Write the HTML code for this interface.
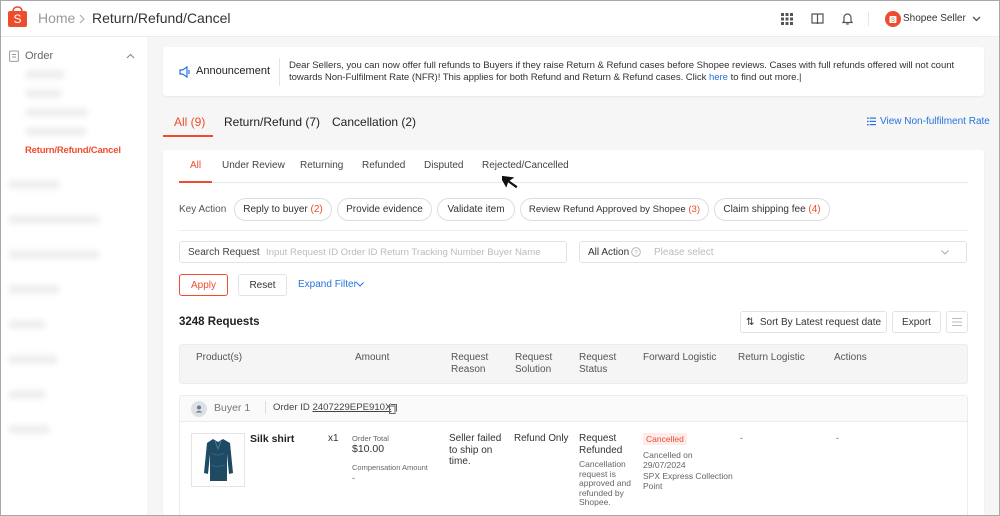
<!DOCTYPE html>
<html><head><meta charset="utf-8"><style>
*{box-sizing:border-box;margin:0;padding:0}
html,body{width:1000px;height:516px;overflow:hidden}
body{font-family:"Liberation Sans",Arial,sans-serif;color:#333;background:#f6f6f6;position:relative}
.frame{position:absolute;left:0;top:0;width:1000px;height:516px;border:1px solid #a8a8a8;pointer-events:none;z-index:10}
.a{position:absolute;white-space:nowrap}
.top{left:0;top:0;width:1000px;height:37px;background:#fff;border-bottom:1px solid #ececec}
.side{left:0;top:37px;width:147px;height:479px;background:#fff}
.blur{position:absolute;background:#eee;border-radius:8px;filter:blur(3px);height:9px}
.card{background:#fff;border-radius:3px;box-shadow:0 1px 2px rgba(0,0,0,.06)}
.chip{position:absolute;top:198px;height:23px;border:1px solid #ddd;border-radius:12px;font-size:10px;display:flex;align-items:center;justify-content:center;color:#333;white-space:nowrap}
.r{color:#ee4d2d}
.box{position:absolute;border:1px solid #e3e3e3;border-radius:3px;background:#fff}
.btn{display:flex;align-items:center;justify-content:center;font-size:10px}
.th{position:absolute;font-size:10px;color:#555;line-height:12px;top:352px}
.s{font-size:9px;color:#666;line-height:11px}
</style></head><body>
<div class="frame"></div>
<div class="a top"></div>
<svg class="a" style="left:8px;top:6px" width="19" height="21" viewBox="0 0 19 21"><path d="M5 6 Q5 1 9.5 1 Q14 1 14 6" fill="none" stroke="#ee4d2d" stroke-width="1.6"/><rect x="0" y="5" width="19" height="16" rx="2" fill="#ee4d2d"/><text x="9.5" y="17" font-size="12" fill="#fff" text-anchor="middle" font-family="Liberation Sans">S</text></svg>
<div class="a" style="left:38px;top:10px;font-size:14px;color:#999">Home</div>
<svg class="a" style="left:79px;top:14px" width="6" height="10"><path d="M1 1l4 4-4 4" fill="none" stroke="#aaa" stroke-width="1.1"/></svg>
<div class="a" style="left:92px;top:10px;font-size:14px;color:#333">Return/Refund/Cancel</div>
<svg class="a" style="left:781px;top:13px" width="12" height="12"><g fill="#555"><rect x="0" y="0" width="3" height="3"/><rect x="4.5" y="0" width="3" height="3"/><rect x="9" y="0" width="3" height="3"/><rect x="0" y="4.5" width="3" height="3"/><rect x="4.5" y="4.5" width="3" height="3"/><rect x="9" y="4.5" width="3" height="3"/><rect x="0" y="9" width="3" height="3"/><rect x="4.5" y="9" width="3" height="3"/><rect x="9" y="9" width="3" height="3"/></g></svg>
<svg class="a" style="left:811px;top:13px" width="13" height="12"><path d="M1 1h4.5q1 0 1 1v9q0-1-1-1H1zM12 1H7.5q-1 0-1 1v9q0-1 1-1H12z" fill="none" stroke="#555" stroke-width="1.2"/></svg>
<svg class="a" style="left:842px;top:12px" width="11" height="14"><path d="M2 9V5.5a3.5 3.5 0 0 1 7 0V9l1 1.5H1z M4.3 12h2.4" fill="none" stroke="#555" stroke-width="1.2"/></svg>
<div class="a" style="left:868px;top:12px;width:1px;height:14px;background:#e5e5e5"></div>
<svg class="a" style="left:885px;top:11px" width="16" height="16"><circle cx="8" cy="8" r="8" fill="#ee4d2d"/><rect x="4.5" y="5" width="7" height="7" rx="1" fill="#fff"/><text x="8" y="11" font-size="6" fill="#ee4d2d" text-anchor="middle">S</text></svg>
<div class="a" style="left:903px;top:13px;font-size:10px;color:#333">Shopee Seller</div>
<svg class="a" style="left:972px;top:16px" width="9" height="6"><path d="M1 1l3.5 3.5L8 1" fill="none" stroke="#555" stroke-width="1.3"/></svg>

<div class="a side"></div>
<svg class="a" style="left:9px;top:50px" width="10" height="12"><rect x="0.6" y="1" width="8.8" height="10.4" rx="1" fill="none" stroke="#999"/><path d="M3 4.5h4M3 7h4" stroke="#999"/></svg>
<div class="a" style="left:25px;top:50px;font-size:11px;color:#666">Order</div>
<svg class="a" style="left:126px;top:53px" width="9" height="6"><path d="M1 5l3.5-3.5L8 5" fill="none" stroke="#888" stroke-width="1.1"/></svg>
<div class="blur" style="left:25px;top:70px;width:40px"></div>
<div class="blur" style="left:25px;top:89px;width:37px"></div>
<div class="blur" style="left:25px;top:108px;width:63px"></div>
<div class="blur" style="left:25px;top:127px;width:62px"></div>
<div class="a" style="left:25px;top:145px;font-size:9.5px;color:#ee4d2d;font-weight:bold;letter-spacing:-.2px">Return/Refund/Cancel</div>
<div class="blur" style="left:8px;top:180px;width:52px"></div>
<div class="blur" style="left:8px;top:215px;width:92px"></div>
<div class="blur" style="left:8px;top:250px;width:92px"></div>
<div class="blur" style="left:8px;top:285px;width:52px"></div>
<div class="blur" style="left:8px;top:320px;width:38px"></div>
<div class="blur" style="left:8px;top:355px;width:50px"></div>
<div class="blur" style="left:8px;top:390px;width:38px"></div>
<div class="blur" style="left:8px;top:425px;width:42px"></div>

<div class="a card" style="left:163px;top:47px;width:821px;height:49px"></div>
<svg class="a" style="left:179px;top:66px" width="12" height="12"><path d="M1 4h2.5L8 1v10L3.5 8H1z" fill="none" stroke="#2673dd" stroke-width="1.2"/><path d="M10 4v4" stroke="#2673dd" stroke-width="1.2"/></svg>
<div class="a" style="left:196px;top:65px;font-size:11px;color:#222">Announcement</div>
<div class="a" style="left:279px;top:58px;width:1px;height:28px;background:#e5e5e5"></div>
<div class="a" style="left:289px;top:60px;font-size:9.6px;line-height:12px;color:#333;letter-spacing:-.05px">Dear Sellers, you can now offer full refunds to Buyers if they raise Return &amp; Refund cases before Shopee reviews. Cases with full refunds offered will not count<br>towards Non-Fulfilment Rate (NFR)! This applies for both Refund and Return &amp; Refund cases. Click <span style="color:#2673dd">here</span> to find out more.|</div>

<div class="a" style="left:174px;top:115px;font-size:12px;color:#ee4d2d">All (9)</div>
<div class="a" style="left:163px;top:135px;width:50px;height:2px;background:#ee4d2d"></div>
<div class="a" style="left:224px;top:115px;font-size:12px;color:#222">Return/Refund (7)</div>
<div class="a" style="left:332px;top:115px;font-size:12px;color:#222">Cancellation (2)</div>
<svg class="a" style="left:867px;top:117px" width="9" height="9"><g fill="#2673dd"><rect x="0" y="0.5" width="1.6" height="1.4"/><rect x="2.6" y="0.5" width="6.4" height="1.2"/><rect x="0" y="3.8" width="1.6" height="1.4"/><rect x="2.6" y="3.8" width="6.4" height="1.2"/><rect x="0" y="7" width="1.6" height="1.4"/><rect x="2.6" y="7" width="6.4" height="1.2"/></g></svg>
<div class="a" style="left:880px;top:116px;font-size:10px;color:#2673dd">View Non-fulfilment Rate</div>

<div class="a card" style="left:163px;top:150px;width:821px;height:366px"></div>
<div class="a" style="left:179px;top:182px;width:789px;height:1px;background:#e8e8e8"></div>
<div class="a" style="left:190px;top:160px;font-size:10px;color:#ee4d2d">All</div>
<div class="a" style="left:179px;top:181px;width:33px;height:2px;background:#ee4d2d"></div>
<div class="a" style="left:222px;top:160px;font-size:10px;color:#444">Under Review</div>
<div class="a" style="left:300px;top:160px;font-size:10px;color:#444">Returning</div>
<div class="a" style="left:362px;top:160px;font-size:10px;color:#444">Refunded</div>
<div class="a" style="left:424px;top:160px;font-size:10px;color:#444">Disputed</div>
<div class="a" style="left:482px;top:160px;font-size:10px;color:#444">Rejected/Cancelled</div>

<div class="a" style="left:179px;top:204px;font-size:10px;color:#555">Key Action</div>
<div class="chip" style="left:234px;width:98px">Reply to buyer&nbsp;<span class="r">(2)</span></div>
<div class="chip" style="left:337px;width:95px">Provide evidence</div>
<div class="chip" style="left:437px;width:78px">Validate item</div>
<div class="chip" style="left:520px;width:189px;font-size:9.6px">Review Refund Approved by Shopee&nbsp;<span class="r">(3)</span></div>
<div class="chip" style="left:714px;width:116px">Claim shipping fee&nbsp;<span class="r">(4)</span></div>
<div class="a" style="left:179px;top:230px;width:789px;height:1px;background:#eee"></div>

<div class="box" style="left:179px;top:241px;width:388px;height:22px"></div>
<div class="a" style="left:188px;top:247px;font-size:10px;color:#444">Search Request</div>
<div class="a" style="left:266px;top:247px;font-size:9.6px;color:#bbb">Input Request ID Order ID Return Tracking Number Buyer Name</div>
<div class="box" style="left:579px;top:241px;width:388px;height:22px"></div>
<div class="a" style="left:588px;top:247px;font-size:10px;color:#333">All Action</div>
<svg class="a" style="left:631px;top:247px" width="10" height="10"><circle cx="5" cy="5" r="4.3" fill="none" stroke="#aaa" stroke-width=".8"/><text x="5" y="7.5" font-size="6.5" fill="#aaa" text-anchor="middle">?</text></svg>
<div class="a" style="left:654px;top:247px;font-size:10px;color:#bbb">Please select</div>
<svg class="a" style="left:941px;top:250px" width="8" height="5"><path d="M.5.5l3.5 3.5L7.5.5" fill="none" stroke="#aaa"/></svg>

<div class="box btn" style="left:179px;top:274px;width:49px;height:22px;border-color:#ee4d2d;color:#ee4d2d">Apply</div>
<div class="box btn" style="left:238px;top:274px;width:49px;height:22px;color:#333">Reset</div>
<div class="a" style="left:298px;top:279px;font-size:10px;color:#2673dd">Expand Filter</div>
<svg class="a" style="left:356px;top:282px" width="8" height="5"><path d="M.5.5l3.5 3.5L7.5.5" fill="none" stroke="#2673dd"/></svg>

<div class="a" style="left:179px;top:316px;font-size:11.5px;color:#222;font-weight:bold">3248 Requests</div>
<div class="box btn" style="left:740px;top:311px;width:147px;height:22px;color:#333">⇅&nbsp; Sort By Latest request date</div>
<div class="box btn" style="left:892px;top:311px;width:49px;height:22px">Export</div>
<div class="box" style="left:946px;top:311px;width:22px;height:22px"></div>
<svg class="a" style="left:952px;top:318px" width="10" height="8"><path d="M0 .5h10M0 4h10M0 7.5h10" stroke="#bbb"/></svg>

<div class="a" style="left:179px;top:344px;width:789px;height:40px;background:#f5f5f5;border:1px solid #ececec;border-radius:3px"></div>
<div class="th" style="left:196px">Product(s)</div>
<div class="th" style="left:355px">Amount</div>
<div class="th" style="left:451px">Request<br>Reason</div>
<div class="th" style="left:515px">Request<br>Solution</div>
<div class="th" style="left:579px">Request<br>Status</div>
<div class="th" style="left:643px">Forward Logistic</div>
<div class="th" style="left:738px">Return Logistic</div>
<div class="th" style="left:834px">Actions</div>

<div class="a" style="left:179px;top:395px;width:789px;height:130px;border:1px solid #ececec;border-radius:3px"></div>
<div class="a" style="left:180px;top:396px;width:787px;height:26px;background:#fafafa;border-bottom:1px solid #ececec"></div>
<svg class="a" style="left:191px;top:401px" width="16" height="16"><circle cx="8" cy="8" r="8" fill="#dde1e6"/><circle cx="8" cy="6.5" r="2" fill="#6d7a88"/><path d="M4.5 11.5q3.5-3.5 7 0z" fill="#6d7a88"/></svg>
<div class="a" style="left:214px;top:402px;font-size:10.5px;color:#777">Buyer 1</div>
<div class="a" style="left:265px;top:401px;width:1px;height:13px;background:#ddd"></div>
<div class="a" style="left:273px;top:402px;font-size:9.6px;color:#444">Order ID <span style="text-decoration:underline">2407229EPE910X</span></div>
<svg class="a" style="left:389px;top:404px" width="8" height="10"><rect x=".5" y="2" width="5.5" height="7.5" fill="none" stroke="#666"/><path d="M2 .5h5.5v7" fill="none" stroke="#666"/></svg>

<div class="a" style="left:191px;top:433px;width:54px;height:54px;border:1px solid #e5e5e5"></div>
<svg class="a" style="left:202px;top:437px" width="32" height="46" viewBox="0 0 32 46"><path d="M11 2l5 3 5-3 7 4 3 30-4 1-2-20 0 27H8l0-27-2 20-4-1 3-30z" fill="#1e4a63"/><path d="M13 4l3 8 3-8" fill="none" stroke="#4a7d99" stroke-width="1"/><path d="M10 16q6 4 12 0M9 28q7 3 14 0" stroke="#2f6582" fill="none"/></svg>
<div class="a" style="left:250px;top:433px;font-size:10.5px;color:#222;font-weight:bold">Silk shirt</div>
<div class="a" style="left:328px;top:433px;font-size:10px;color:#333">x1</div>
<div class="a s" style="left:352px;top:433px;font-size:7.5px">Order Total</div>
<div class="a" style="left:352px;top:443px;font-size:10.5px;color:#333">$10.00</div>
<div class="a s" style="left:352px;top:462px;font-size:7.5px">Compensation Amount</div>
<div class="a s" style="left:352px;top:473px">-</div>
<div class="a" style="left:449px;top:433px;font-size:10px;line-height:11.5px;color:#333">Seller failed<br>to ship on<br>time.</div>
<div class="a" style="left:514px;top:433px;font-size:9.8px;color:#333">Refund Only</div>
<div class="a" style="left:579px;top:433px;font-size:10px;line-height:11.5px;color:#333">Request<br>Refunded</div>
<div class="a s" style="left:579px;top:460px;line-height:9.6px;font-size:8.5px">Cancellation<br>request is<br>approved and<br>refunded by<br>Shopee.</div>
<div class="a" style="left:643px;top:433px;height:12px;padding:0 3px;background:#fdeceb;font-size:8.5px;line-height:12px;color:#ee4d2d">Cancelled</div>
<div class="a s" style="left:643px;top:451px;line-height:9.8px;font-size:8.5px">Cancelled on<br>29/07/2024</div>
<div class="a s" style="left:643px;top:472px;line-height:9.8px;font-size:8.5px">SPX Express Collection<br>Point</div>
<div class="a s" style="left:740px;top:433px">-</div>
<div class="a s" style="left:836px;top:433px">-</div>

<svg class="a" style="left:502px;top:169px" width="22" height="26" viewBox="0 0 22 26"><path d="M1 1l0 16 4.5-4 4 9 3-1.5-4-8.5 6.5-.5z" transform="rotate(-30 8 12)" fill="#111" stroke="#fff" stroke-width="1"/></svg>
</body></html>
